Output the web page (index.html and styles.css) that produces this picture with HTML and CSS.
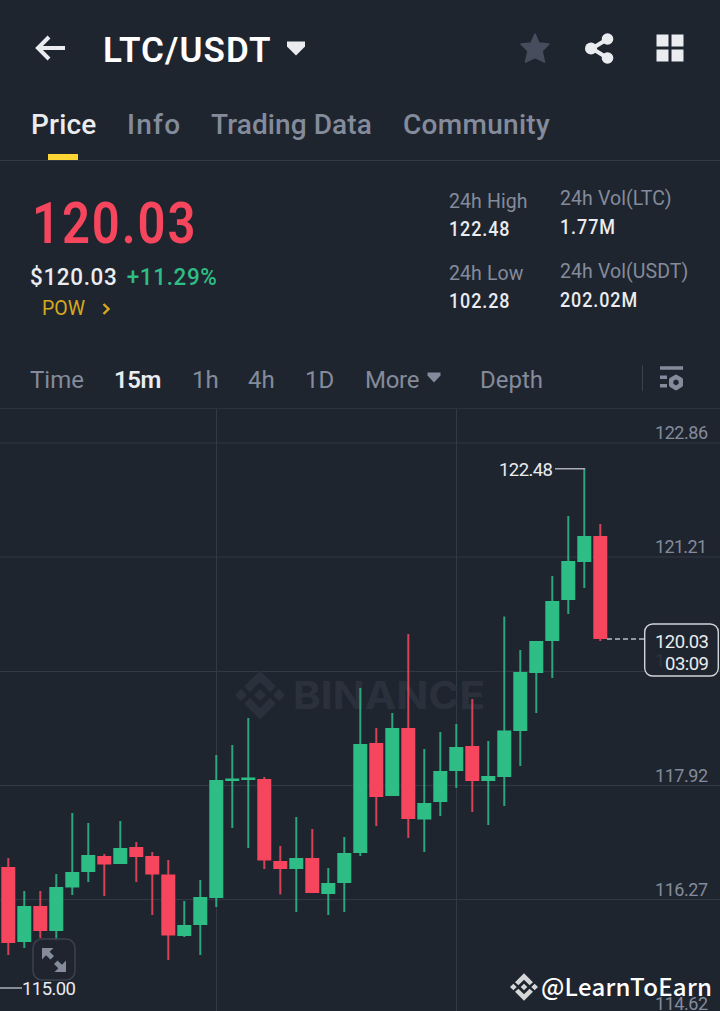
FILE: index.html
```
<!DOCTYPE html>
<html lang="en">
<head>
    <meta charset="UTF-8">
    <meta name="viewport" content="width=device-width, initial-scale=1.0">
    <title>LTC/USDT</title>
    <link rel="stylesheet" href="styles.css">
</head>
<body>
    <header class="header">
        <svg class="back" width="32" height="26" viewBox="0 0 32 26">
            <path d="M14 2 L3 13 L14 24 M3 13 H30" fill="none" stroke="#eaecef" stroke-width="4"/>
        </svg>
        <h1 class="pair">LTC/USDT</h1>
        <svg class="pair-arrow" width="18" height="15" viewBox="0 0 18 15">
            <path d="M0 0.5 H18 V5.5 L9 14.5 L0 5.5 Z" fill="#eaecef"/>
        </svg>
        <div class="header-icons">
            <svg width="30" height="31" viewBox="0 0 30 31">
                <path d="M15 1 L19 10 L29 11 L22 18 L24.5 29 L15 24.5 L5.5 29 L8 18 L1 11 L11 10 Z" fill="#474d5c" stroke="#474d5c" stroke-width="1.5" stroke-linejoin="round"/>
            </svg>
            <svg width="30" height="31" viewBox="0 0 30 31">
                <path d="M22.5 6 L7 15.5 L22.5 25" fill="none" stroke="#eaecef" stroke-width="4"/>
                <circle cx="22.5" cy="6" r="5.8" fill="#eaecef"/>
                <circle cx="6" cy="15.5" r="6" fill="#eaecef"/>
                <circle cx="22.5" cy="25" r="5.8" fill="#eaecef"/>
            </svg>
            <svg width="28" height="28" viewBox="0 0 28 28">
                <path d="M0.5 0.5h12v12h-12z M15.5 0.5h12v12h-12z M0.5 15.5h12v12h-12z M15.5 15.5h12v12h-12z" fill="#eaecef"/>
            </svg>
        </div>
    </header>

    <nav class="tabs">
        <a class="tab active"><span class="t-price">Price</span></a>
        <a class="tab"><span class="t-info">Info</span></a>
        <a class="tab"><span class="t-data">Trading Data</span></a>
        <a class="tab"><span class="t-comm">Community</span></a>
    </nav>

    <section class="summary">
        <div class="price-block">
            <div class="last-price">120.03</div>
            <div class="fiat"><span class="usd">$120.03</span><span class="change">+11.29%</span></div>
            <div class="tag">
                <span>POW</span>
                <svg width="8" height="12" viewBox="0 0 8 12">
                    <path d="M1.5 1 L6.5 6 L1.5 11" fill="none" stroke="#d6a91c" stroke-width="2.4"/>
                </svg>
            </div>
        </div>
        <div class="stats high-low">
            <div class="stat"><div class="label">24h High</div><div class="value">122.48</div></div>
            <div class="stat"><div class="label">24h Low</div><div class="value">102.28</div></div>
        </div>
        <div class="stats volume">
            <div class="stat"><div class="label">24h Vol(LTC)</div><div class="value">1.77M</div></div>
            <div class="stat"><div class="label">24h Vol(USDT)</div><div class="value">202.02M</div></div>
        </div>
    </section>

    <div class="intervals">
        <span>Time</span>
        <span class="selected">15m</span>
        <span>1h</span>
        <span>4h</span>
        <span>1D</span>
        <span class="more">More
            <svg width="14" height="11" viewBox="0 0 14 11"><path d="M0.5 0.5 H13.5 V3.5 L7 10.5 L0.5 3.5 Z" fill="#848b9b"/></svg>
        </span>
        <span>Depth</span>
        <span class="settings">
            <svg width="26" height="26" viewBox="0 0 26 26">
                <path d="M1 1.2h23v3.6H1z M1 10.4h7v3.6H1z M1 19h7v3.6H1z" fill="#848b9b"/>
                <path d="M17 11.8 L21.8 14.6 V20.2 L17 23 L12.2 20.2 V14.6 Z" fill="none" stroke="#848b9b" stroke-width="4.4" stroke-linejoin="round"/>
            </svg>
        </span>
    </div>

    <main class="chart">
        <svg id="chart" width="720" height="602" viewBox="0 409 720 602">
            <g class="grid">
                <path d="M0 443H720 M0 557H720 M0 671.5H720 M0 785.5H720 M0 899.5H720 M216.5 409V1011 M456.5 409V1011"/>
            </g>

            <g class="watermark">
                <g transform="translate(260 695)">
                    <path d="M0 -24.5 L16 -8.5 L10 -3 L0 -13 L-10 -3 L-16 -8.5 Z M0 24.5 L16 8.5 L10 3 L0 13 L-10 3 L-16 8.5 Z M0 -6 L6 0 L0 6 L-6 0 Z M19 -6 L25 0 L19 6 L13 0 Z M-19 -6 L-13 0 L-19 6 L-25 0 Z"/>
                </g>
                <text x="293" y="709" textLength="192" lengthAdjust="spacingAndGlyphs">BINANCE</text>
            </g>

            <g class="axis">
                <text x="655" y="439" textLength="53">122.86</text>
                <text x="655" y="553" textLength="52">121.21</text>
                <text x="655" y="782" textLength="53">117.92</text>
                <text x="655" y="896" textLength="53">116.27</text>
                <text x="655" y="1010" textLength="53">114.62</text>
            </g>

            <g id="candles"></g>

            <path class="marker-line" d="M555 468.7H585 M0 988H22"/>
            <text class="marker" x="499" y="476" textLength="54">122.48</text>
            <text class="marker" x="22" y="995" textLength="54">115.00</text>

            <path class="last-line" d="M607 639H644"/>
            <rect class="last-box" x="644.7" y="624" width="73.6" height="52" rx="8"/>
            <text class="ghost" x="655" y="667">1</text>
            <text class="marker" x="655" y="648" textLength="54">120.03</text>
            <text class="marker" x="665" y="670" textLength="44">03:09</text>

            <g class="expand">
                <rect x="33" y="939" width="42" height="41" rx="9"/>
                <path d="M42 948H53.5L49.7 951.8L54 956L50.5 959.5L46 955.2L42 959.5Z M66 972H54.5L58.3 968.2L54 964L57.5 960.5L62 964.8L66 960.5Z"/>
            </g>

            <g class="author">
                <g transform="translate(524 987) scale(0.56)">
                    <path d="M0 -24.5 L16 -8.5 L10 -3 L0 -13 L-10 -3 L-16 -8.5 Z M0 24.5 L16 8.5 L10 3 L0 13 L-10 3 L-16 8.5 Z M0 -6 L6 0 L0 6 L-6 0 Z M19 -6 L25 0 L19 6 L13 0 Z M-19 -6 L-13 0 L-19 6 L-25 0 Z"/>
                </g>
                <text x="541" y="996" textLength="171">@LearnToEarn</text>
            </g>
        </svg>
    </main>

    <script src="chart.js"></script>
</body>
</html>
```
FILE: styles.css
```
body {
    margin: 0;
    width: 720px;
    height: 1011px;
    overflow: hidden;
    background-color: #1f252f;
    color: #eaecef;
    font-family: Roboto, "Liberation Sans", sans-serif;
}

svg {
    display: block;
}

.header {
    display: flex;
    align-items: center;
    height: 96px;
    padding: 0 36px 0 35px;
    box-sizing: border-box;
}

.pair {
    margin: 5px 17px 0 36px;
    width: 167px;
    font-size: 35px;
    line-height: 40px;
    font-weight: 600;
    letter-spacing: 1.1px;
    color: #fff;
    white-space: nowrap;
}

.header-icons {
    display: flex;
    align-items: center;
    margin-left: auto;
}

.header-icons svg + svg {
    margin-left: 35px;
}

.header-icons svg:last-child {
    margin-left: 41px;
}

.tabs {
    display: grid;
    grid-template-columns: 96px 84px 192px 1fr;
    height: 64px;
    padding-left: 31px;
    border-bottom: 1px solid #323944;
}

.tab {
    position: relative;
    padding-top: 12px;
    font-size: 28px;
    line-height: 34px;
    font-weight: 500;
    color: #848b9b;
    white-space: nowrap;
}

.tab.active {
    color: #eaecef;
}

.tab.active::after {
    content: "";
    position: absolute;
    left: 17px;
    bottom: 0;
    width: 30px;
    height: 6px;
    background-color: #fcd535;
}

.t-price {
    letter-spacing: 0.2px;
}

.t-info {
    letter-spacing: 1.3px;
}

.t-data {
    letter-spacing: 0.1px;
}

.t-comm {
    letter-spacing: 0.3px;
}

.summary {
    display: grid;
    grid-template-columns: 418px 111px 1fr;
    height: 189px;
    padding-left: 31px;
}

.last-price {
    margin: 33px 0 0 1px;
    font-size: 57px;
    line-height: 60px;
    font-weight: 600;
    letter-spacing: 2.2px;
    color: #f6465d;
    transform: scaleX(0.86);
    transform-origin: left;
}

.fiat {
    display: flex;
    margin: 9px 0 0 -1px;
    font-size: 24px;
    line-height: 28px;
    font-weight: 500;
    letter-spacing: 0.7px;
    transform: scaleX(0.935);
    transform-origin: left;
}

.change {
    margin-left: 10px;
    color: #2ebd85;
}

.tag {
    display: flex;
    align-items: center;
    gap: 17px;
    margin: 7px 0 0 11px;
    font-size: 19.5px;
    line-height: 22px;
    color: #d6a91c;
}

.stats {
    padding-top: 29px;
}

.volume {
    padding-top: 26px;
}

.stat {
    height: 72px;
}

.volume .stat {
    height: 73px;
}

.label {
    font-size: 19.5px;
    line-height: 24px;
    letter-spacing: 0.1px;
    color: #848b9b;
    white-space: nowrap;
}

.value {
    margin-top: 4px;
    font-size: 19.5px;
    line-height: 24px;
    font-weight: 500;
    letter-spacing: 1px;
    transform: scaleX(0.92);
    transform-origin: left;
}

.volume .value {
    margin-top: 5px;
}

.intervals {
    display: grid;
    grid-template-columns: 84px 78px 56px 57px 60px 115px 162px 1fr;
    align-items: center;
    height: 59px;
    padding: 1px 0 0 30px;
    box-sizing: border-box;
    border-bottom: 1px solid #2b323d;
    font-size: 24px;
    color: #848b9b;
}

.intervals .selected {
    color: #eaecef;
    font-weight: 600;
    letter-spacing: -0.5px;
}

.more {
    display: flex;
    align-items: center;
    gap: 8px;
    letter-spacing: -0.3px;
}

.more svg {
    margin-bottom: 4px;
}

.settings {
    height: 26px;
    padding-left: 16px;
    margin-bottom: 3px;
    border-left: 1px solid #3b424e;
}

.grid path {
    fill: none;
    stroke: #323944;
    stroke-width: 1;
}

.watermark {
    fill: #2b313c;
}

.watermark text {
    font-family: Inter, "Liberation Sans", sans-serif;
    font-size: 38px;
    font-weight: 700;
}

.axis text {
    font-size: 18px;
    fill: #848b9b;
}

.up {
    fill: #2ebd85;
}

.down {
    fill: #f6465d;
}

.wick {
    opacity: 0.85;
}

.marker {
    font-size: 18.5px;
    fill: #eaecef;
}

.marker-line {
    fill: none;
    stroke: #a9aeb8;
    stroke-width: 1.5;
}

.last-line {
    stroke: #b7bdc6;
    stroke-width: 1.5;
    stroke-dasharray: 5 3;
}

.last-box {
    fill: #1f252f;
    stroke: #cfd3da;
    stroke-width: 1.4;
}

.ghost {
    font-size: 18px;
    fill: #2d333e;
}

.expand rect {
    fill: #1f252f;
    fill-opacity: 0.9;
    stroke: #3b414d;
    stroke-width: 1.5;
}

.expand path {
    fill: #848b9b;
}

.author path {
    fill: #d5d6d8;
}

.author text {
    font-family: "Noto Sans CJK SC", "Noto Sans", sans-serif;
    font-size: 24px;
    font-weight: 500;
    fill: #fff;
}
```
FILE: chart.js
```
// [high, body top, body bottom, low, direction]
const candles = [
    [858, 867, 943, 955, 'down'],
    [891, 906, 942, 948, 'up'],
    [891, 906, 931, 938, 'down'],
    [874, 887, 931, 942, 'up'],
    [813, 872, 887.5, 895, 'up'],
    [823, 855, 872, 882, 'up'],
    [854, 856, 864.5, 896, 'down'],
    [821, 848, 864, 864, 'up'],
    [842, 847, 857, 882, 'down'],
    [852, 856, 874.5, 915, 'down'],
    [860, 874.5, 935.5, 960, 'down'],
    [901, 925, 936, 937, 'up'],
    [880, 897, 925, 955, 'up'],
    [755, 780, 898, 907, 'up'],
    [745, 778.5, 781, 828, 'up'],
    [718, 777.5, 780, 848, 'up'],
    [777, 779, 860.5, 869, 'down'],
    [846, 861, 869, 894.5, 'down'],
    [817, 858, 869, 912, 'up'],
    [829, 858, 893, 893, 'down'],
    [868, 883, 894, 915, 'up'],
    [837, 853, 883, 912, 'up'],
    [688, 744, 853, 856, 'up'],
    [728, 743, 797, 826, 'down'],
    [713, 728, 796, 796, 'up'],
    [634, 728, 819, 838, 'down'],
    [749, 803, 819.5, 852, 'up'],
    [732, 771, 802, 816, 'up'],
    [724, 747, 771, 788, 'up'],
    [699, 746, 781, 812, 'down'],
    [741, 776, 781, 825, 'up'],
    [616.5, 730.5, 777, 806, 'up'],
    [650, 672, 731, 766, 'up'],
    [641, 641, 673, 713, 'up'],
    [576, 601, 641, 678, 'up'],
    [516, 561, 600, 614, 'up'],
    [468, 536, 562, 588, 'up'],
    [524, 536, 639, 641, 'down']
];

const group = document.getElementById('candles');

function addRect(x, y, width, height, className) {
    const rect = document.createElementNS('http://www.w3.org/2000/svg', 'rect');
    rect.setAttribute('x', x);
    rect.setAttribute('y', y);
    rect.setAttribute('width', width);
    rect.setAttribute('height', height);
    rect.setAttribute('class', className);
    group.appendChild(rect);
}

candles.forEach(([high, top, bottom, low, dir], i) => {
    const x = 8.3 + i * 16;
    addRect(x - 1, high, 2, low - high, `wick ${dir}`);
    addRect(x - 7, top, 14, bottom - top, dir);
});
```
